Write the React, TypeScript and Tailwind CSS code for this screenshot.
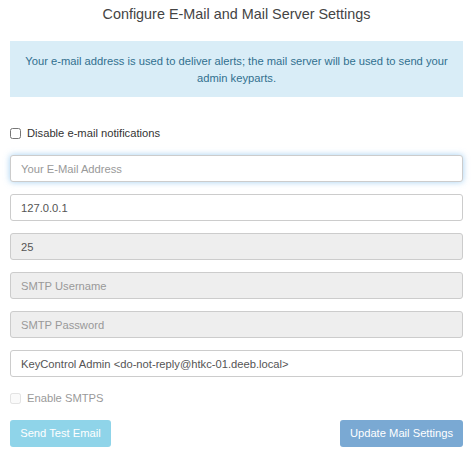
import React from "react";

const inputBase =
  "block w-full h-[27px] px-[10px] text-[11.2px] rounded-[3px] border border-[#cccccc] outline-none";

const App = () => {
  return (
    <div className="w-[474px] h-[454px] bg-white font-['Liberation_Sans',Arial,sans-serif] text-[#555555] overflow-hidden">
      <div className="pl-[10px] pr-[11px]">
        <h3 className="pt-[5px] h-[41px] text-center text-[14.4px] leading-[18px] text-[#444444]">
          Configure E-Mail and Mail Server Settings
        </h3>

        <div className="h-[56px] bg-[#d9edf7] text-[#31708f] text-[11.2px] leading-[17px] text-center px-[14px] pt-[12px]">
          Your e-mail address is used to deliver alerts; the mail server will be used to send your admin keyparts.
        </div>

        <label className="flex items-center gap-[6px] mt-[30px] h-[12px] text-[11.2px] text-[#333333]">
          <input type="checkbox" className="w-[11px] h-[11px] m-0" />
          Disable e-mail notifications
        </label>

        <div className="mt-[16px] flex flex-col gap-[12px]">
          <input
            className={`${inputBase} bg-white border-[#66afe9] shadow-[0_0_6px_rgba(102,175,233,0.6)] placeholder:text-[#999999]`}
            placeholder="Your E-Mail Address"
          />
          <input className={`${inputBase} bg-white`} defaultValue="127.0.0.1" />
          <input className={`${inputBase} bg-[#eeeeee]`} defaultValue="25" disabled />
          <input
            className={`${inputBase} bg-[#eeeeee] placeholder:text-[#999999]`}
            placeholder="SMTP Username"
            disabled
          />
          <input
            className={`${inputBase} bg-[#eeeeee] placeholder:text-[#999999]`}
            placeholder="SMTP Password"
            disabled
          />
          <input
            className={`${inputBase} bg-white`}
            defaultValue="KeyControl Admin <do-not-reply@htkc-01.deeb.local>"
          />
        </div>

        <label className="flex items-center gap-[6px] mt-[15px] h-[12px] text-[11.2px] text-[#555555] opacity-60">
          <input type="checkbox" className="w-[11px] h-[11px] m-0" disabled />
          Enable SMTPS
        </label>

        <div className="flex justify-between mt-[16px]">
          <button className="h-[27px] w-[101px] rounded-[3px] bg-[#8fd4e9] text-white text-[11.2px]">
            Send Test Email
          </button>
          <button className="h-[27px] w-[123px] rounded-[3px] bg-[#7aa9d3] text-white text-[11.2px]">
            Update Mail Settings
          </button>
        </div>
      </div>
    </div>
  );
};

export default App;
